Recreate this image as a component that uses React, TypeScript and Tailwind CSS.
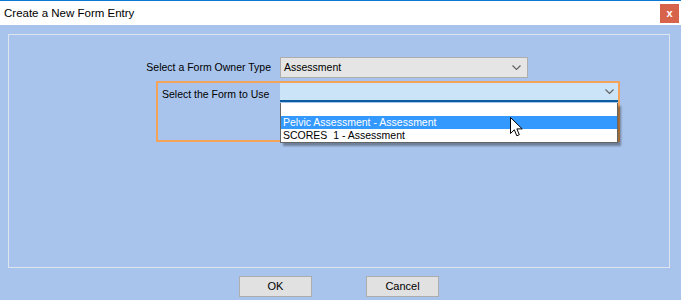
import React from "react";

const Chevron = () => (
  <svg width="9" height="5" viewBox="0 0 9 5" className="shrink-0">
    <path d="M0.5 0.5 L4.5 4.5 L8.5 0.5" fill="none" stroke="#606060" strokeWidth="1.1" />
  </svg>
);

const Cursor = () => (
  <svg width="14" height="21" viewBox="0 0 14 21">
    <path
      d="M0.5 0.5 L0.5 16.5 L4.3 12.8 L6.8 18.8 L9.3 17.7 L6.9 11.9 L12.2 11.9 Z"
      fill="#ffffff"
      stroke="#000000"
      strokeWidth="1"
      strokeLinejoin="miter"
    />
  </svg>
);

export default function App() {
  const font = { fontFamily: '"Liberation Sans", Arial, sans-serif' };
  return (
    <div className="w-[681px] h-[300px] flex flex-col bg-[#a8c4ec] overflow-hidden text-black" style={font}>
      {/* Title bar */}
      <div className="h-[25px] shrink-0 bg-white border-t border-[#0a78d4] flex items-center justify-between pl-[4px] pr-[2px]">
        <span className="text-[11.5px] leading-none mt-[1px]">Create a New Form Entry</span>
        <div className="w-[19px] h-[19px] mt-[1px] bg-[#d7644a] flex items-center justify-center text-white text-[11px] font-bold leading-none">
          x
        </div>
      </div>
      {/* Body */}
      <div className="flex-1 flex flex-col pl-[8px] pt-[9px]">
        <div className="relative w-[662px] h-[234px] border border-[#dfe5ee]">
          {/* Row 1 */}
          <div className="flex items-center mt-[22px]">
            <div className="w-[271px] pr-[9px] text-right text-[10.5px]">Select a Form Owner Type</div>
            <div className="w-[248px] h-[21px] bg-[#e5e5e5] border border-[#adadad] flex items-center justify-between pl-[3px] pr-[6px] text-[10.5px]">
              <span>Assessment</span>
              <Chevron />
            </div>
          </div>
          {/* Row 2 */}
          <div className="relative ml-[147px] mt-[3px] w-[464px] h-[61px] border-2 border-[#f4a45a] flex">
            <div className="w-[122px] pl-[4px] pt-[4px] text-[10.5px]">Select the Form to Use</div>
            <div className="flex-1 flex flex-col">
              <div className="h-[19px] bg-[#cbe4f8] border-b-2 border-[#0a5d9e] flex items-center justify-end pr-[4px]">
                <Chevron />
              </div>
            </div>
            {/* dropdown list */}
            <div className="absolute left-[122px] top-[20px] w-[338px] h-[40px] bg-white border border-[#646464] border-t-0 shadow-[3px_3px_2px_rgba(0,0,0,0.35)] flex flex-col text-[10.5px] leading-none z-10">
              <div className="h-[13px]" />
              <div className="h-[13px] bg-[#3399ff] text-white flex items-center pl-[2px]">Pelvic Assessment - Assessment</div>
              <div className="h-[13px] flex items-center pl-[2px] whitespace-pre">SCORES  1 - Assessment</div>
            </div>
          </div>
          <div className="absolute left-[501px] top-[82px] z-20">
            <Cursor />
          </div>
        </div>
        {/* Buttons */}
        <div className="flex mt-[8px] pl-[231px] gap-[54px]">
          <button className="w-[73px] h-[21px] bg-[#e1e1e1] border border-[#adadad] text-[11px]">OK</button>
          <button className="w-[73px] h-[21px] bg-[#e1e1e1] border border-[#adadad] text-[11px]">Cancel</button>
        </div>
      </div>
    </div>
  );
}
